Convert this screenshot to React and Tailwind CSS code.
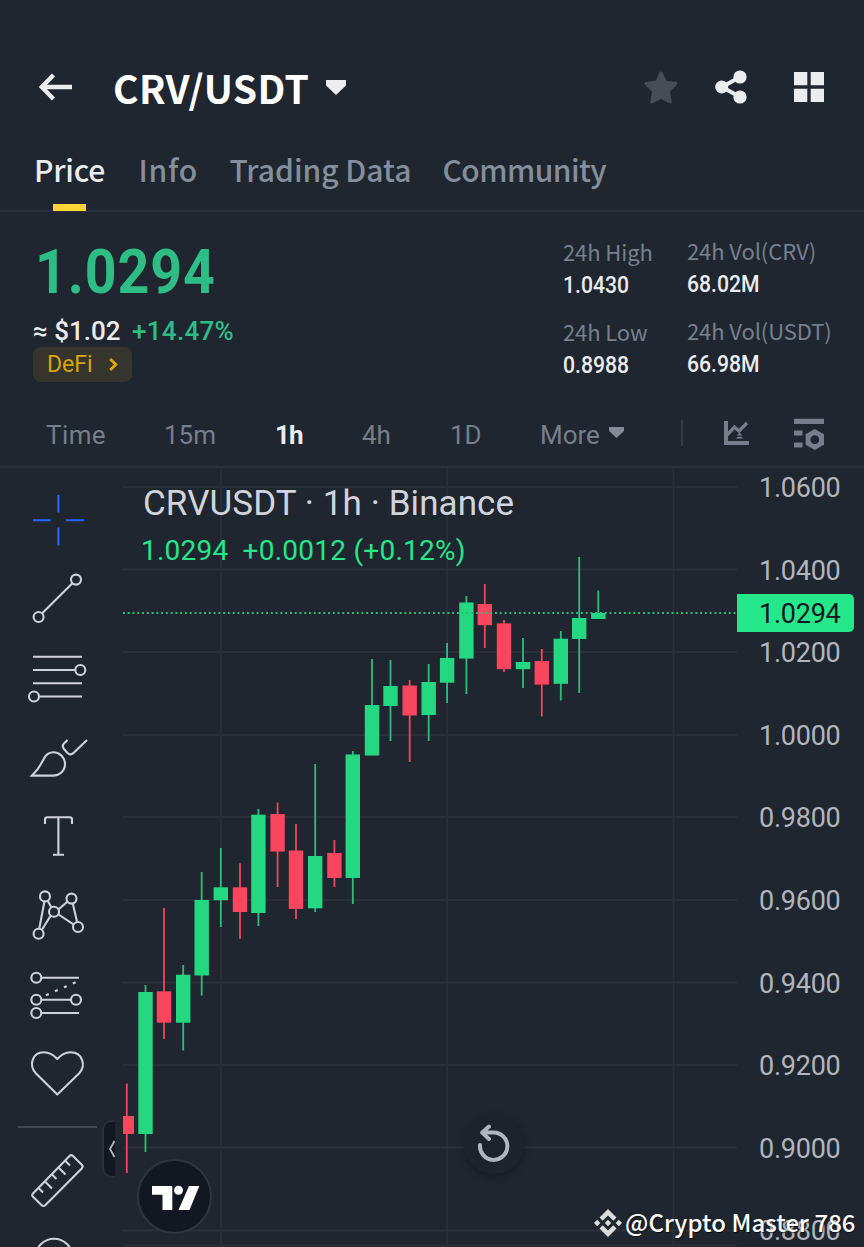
const PLEX = "font-['Noto_Sans_CJK_SC','Noto_Sans',sans-serif]";
const DIN = "font-[Roboto,sans-serif]";

// center x, body top, body bottom, wick top, wick bottom, rising
const CANDLES = [
  [126.8, 1116, 1134, 1083.5, 1173, 0],
  [145.5, 992, 1134, 985, 1152, 1],
  [164, 991.3, 1022.7, 908, 1039, 0],
  [183.2, 974.7, 1022.7, 965, 1050.5, 1],
  [201.7, 900, 975.5, 872, 995.5, 1],
  [220.8, 887.3, 900.2, 848, 927, 1],
  [240, 887.3, 912, 863.3, 938.8, 0],
  [258.4, 814.7, 913, 809, 926, 1],
  [277.6, 814, 851.6, 802.5, 887, 0],
  [296, 850.5, 909, 824, 919, 0],
  [315.2, 856, 908.3, 764, 912, 1],
  [334.4, 853, 878, 840, 887, 0],
  [352.8, 754.5, 878, 751, 904, 1],
  [372, 705, 755.5, 659, 755, 1],
  [390.5, 686, 706, 660, 741, 1],
  [409.7, 685.5, 715.5, 680, 762, 0],
  [428.7, 682, 715, 664, 741, 1],
  [447.1, 658, 682.7, 643, 703, 1],
  [466.4, 602.5, 658.6, 596, 694, 1],
  [484.8, 604, 625.2, 584, 648, 0],
  [504, 623.4, 669.2, 620, 672, 0],
  [523, 662, 669.2, 638, 688, 1],
  [541.8, 661, 684.6, 649, 716.5, 0],
  [560.8, 638.7, 683.8, 631, 700.5, 1],
  [579.2, 618, 639, 557, 693, 1],
  [598.3, 613, 619, 590.5, 614, 1],
];
const GRID_Y = [487, 569.5, 652, 735, 817, 900, 982.5, 1065, 1147.5, 1230.5, 1245.5];
const GRID_X = [221, 447, 673.5];
const LABELS = ["1.0600", "1.0400", "1.0200", "1.0000", "0.9800", "0.9600", "0.9400", "0.9200", "0.9000", "0.8800"];

function Header() {
  return (
    <header className="flex h-[130px] items-start pt-[62px] pr-[40px] pl-[39px]">
      <svg className="mt-[11px] h-[28px] w-[33px] shrink-0" viewBox="0 0 33 28" fill="none" stroke="#eaecef" strokeWidth="4.4">
        <path d="M2.5 14H33M14.5 2L2.8 14L14.5 26" />
      </svg>
      <h1 className={`${PLEX} ml-[41px] h-[48px] w-[213px] text-[39px] leading-[50px] font-bold tracking-[0.3px] whitespace-nowrap text-white`}>CRV/USDT</h1>
      <svg className="mt-[18px] h-[15px] w-[20px] shrink-0" viewBox="0 0 20 15" fill="#eaecef">
        <path d="M0 0H20V5.5L10 15L0 5.5Z" />
      </svg>
      <div className="mt-[1px] ml-auto flex items-center">
        <svg className="mt-[7px] h-[33px] w-[34px]" viewBox="0 0 34 33" fill="#474d57" stroke="#474d57" strokeWidth="3" strokeLinejoin="round">
          <path d="M17 2L21.3 11L32 12.6L24.4 20L26.2 31L17 26.2L7.8 31L9.6 20L2 12.6L12.7 11Z" />
        </svg>
        <svg className="mt-[7px] ml-[37px] h-[34px] w-[33px]" viewBox="0 0 33 34" fill="#eaecef">
          <path d="M7 17L25 7M7 17L25 27" stroke="#eaecef" strokeWidth="4" />
          <circle cx="6.7" cy="17" r="6.5" />
          <circle cx="25" cy="7" r="6.6" />
          <circle cx="25" cy="27" r="6.6" />
        </svg>
        <svg className="mt-[7px] ml-[46px] h-[30px] w-[30px]" viewBox="0 0 30 30" fill="#eaecef">
          <path d="M0 0H13.3V13.3H0ZM16.7 0H30V13.3H16.7ZM0 16.7H13.3V30H0ZM16.7 16.7H30V30H16.7Z" />
        </svg>
      </div>
    </header>
  );
}

function Tabs() {
  return (
    <nav className={`${PLEX} flex h-[82px] border-b-2 border-[#2a2e39] pl-[34px] text-[30px] leading-[79px] font-medium whitespace-nowrap text-[#848e9c]`}>
      <div className="flex w-[104.5px] flex-col">
        <span className="h-[74px] tracking-[-0.2px] text-[#eaecef]">Price</span>
        <span className="ml-[19px] h-[7px] w-[33px] shrink-0 bg-[#fcd535]" />
      </div>
      <span className="w-[91px] tracking-[0.7px]">Info</span>
      <span className="w-[213px]">Trading Data</span>
      <span className="tracking-[-0.55px]">Community</span>
    </nav>
  );
}

function Stat({ label, value, className }) {
  return (
    <div className={className}>
      <div className={`${PLEX} h-[32px] text-[22px] leading-[28px] tracking-[-0.1px] whitespace-nowrap text-[#76808f]`}>{label}</div>
      <div className={`${DIN} h-[32px] origin-left scale-x-[0.92] text-[23px] leading-[33px] font-medium whitespace-nowrap text-[#eaecef]`}>{value}</div>
    </div>
  );
}

function Summary() {
  return (
    <section className="flex h-[190px]">
      <div className="w-[563px] pl-[33px]">
        <div className={`${DIN} mt-[28px] ml-[2px] h-[64px] w-[200px] origin-left scale-x-[0.91] text-[61px] leading-[64px] font-bold tracking-[1px] text-[#2ebd85]`}>1.0294</div>
        <div className={`${DIN} mt-[12px] flex h-[30px] text-[26px] leading-[30px] font-medium whitespace-nowrap`}>
          <span className="w-[99px] text-[#eaecef]">≈ $1.02</span>
          <span className="tracking-[0.3px] text-[#2ebd85]">+14.47%</span>
        </div>
        <div className="mt-[1px] flex h-[35px] w-[99px] items-center rounded-[8px] bg-[#35342d] pl-[14px]">
          <span className={`${DIN} w-[62px] text-[23px] leading-[36px] text-[#d9a50b]`}>DeFi</span>
          <svg className="h-[13px] w-[9px]" viewBox="0 0 9 13" fill="none" stroke="#e0a90a" strokeWidth="2.8">
            <path d="M1.2 1L6.8 6.5L1.2 12" />
          </svg>
        </div>
      </div>
      <div className="flex w-[124px] flex-col pt-[25px]">
        <Stat label="24h High" value="1.0430" />
        <Stat className="mt-[16px]" label="24h Low" value="0.8988" />
      </div>
      <div className="flex flex-col pt-[24px]">
        <Stat label="24h Vol(CRV)" value="68.02M" />
        <Stat className="mt-[16px]" label="24h Vol(USDT)" value="66.98M" />
      </div>
    </section>
  );
}

function Intervals() {
  return (
    <div className={`${DIN} flex h-[66px] border-b-2 border-[#29303a] pl-[46px] text-[26px] leading-[67px] whitespace-nowrap text-[#767e8c]`}>
      <span className="w-[118px] tracking-[0.4px]">Time</span>
      <span className="w-[111px]">15m</span>
      <span className="w-[87px] font-bold tracking-[-0.8px] text-[#eaecef]">1h</span>
      <span className="w-[88px]">4h</span>
      <span className="w-[90px]">1D</span>
      <span className="w-[69px]">More</span>
      <svg className="mt-[25px] h-[11px] w-[15px]" viewBox="0 0 15 11" fill="#848b97">
        <path d="M0 0H15V4L7.5 11L0 4Z" />
      </svg>
      <span className="mt-[18px] ml-[57px] h-[26px] w-[2px] bg-[#333b47]" />
      <svg className="mt-[18px] ml-[41px] h-[26px] w-[26px]" viewBox="0 0 26 26" fill="none" stroke="#767e8c" strokeWidth="4">
        <path d="M2 1V23H25" />
        <path d="M3 15L10.5 7L15 11L23 3" strokeWidth="3.3" />
        <path d="M15.5 12.5L18.4 15.5H12.6ZM11.5 18.6Q15.5 14.6 19.5 18.6Z" fill="#767e8c" stroke="none" />
      </svg>
      <svg className="mt-[16px] ml-[43px] h-[33px] w-[32px]" viewBox="0 0 32 33" fill="#767e8c">
        <path d="M1 0.7H31V6H1ZM1 12.5H9.5V17.5H1ZM1 24.5H9.5V29.5H1Z" />
        <path fillRule="evenodd" d="M21.8 11L31 16.3V26.8L21.8 32L12.6 26.8V16.3ZM21.8 17.2A4.4 4.4 0 1 0 21.8 26A4.4 4.4 0 1 0 21.8 17.2Z" />
      </svg>
    </div>
  );
}

function Toolbar() {
  return (
    <aside className="flex w-[123px] shrink-0">
      <svg className="h-[779px] w-[103px] shrink-0" viewBox="0 468 103 779" fill="none" stroke="#cfd2db" strokeWidth="2.1">
        <path d="M58.4 495V512.5M58.4 527.5V545.5M33 520.3H50.5M66 520.3H84" stroke="#2962ff" />
        <path d="M42.2 613.3L72.4 583.3" />
        <circle cx="38.6" cy="617" r="5" />
        <circle cx="76" cy="579.6" r="5" />
        <path d="M33 656.7H82M33 670H75M33 683.3H82M39 696.5H82" />
        <circle cx="80.3" cy="670" r="5" />
        <circle cx="34" cy="696.5" r="5" />
        <path d="M32 775.6C40 768 42 762 44 758.5C46 754.5 49.5 752.3 53.5 752.3C59.5 752.3 65 757.5 65 764C65 770.5 60 775.6 53 775.6Z" />
        <path d="M67.5 740L64 743.5Q61.5 746 64 749L67.5 753Q70.7 756 74 752.5L87 740" />
        <path d="M45 824V819.5Q45 817.3 47.5 817.3H69.5Q72 817.3 72 819.5V824M58.4 817.3V854.8M53 854.8H64" />
        <path d="M44.4 901.5L39.3 928.5M47.8 900.9L51.5 907.5M50.6 915.9L41.9 929.8M58.4 909.5L67.3 901.8M58.6 914.5L73.8 924.6M72.8 903.6L77.1 922" />
        <circle cx="45" cy="896.4" r="5" />
        <circle cx="71.5" cy="898.6" r="5" />
        <circle cx="54" cy="911.8" r="5" />
        <circle cx="78" cy="927" r="5" />
        <circle cx="38.6" cy="933.8" r="5" />
        <path d="M41.5 977.7H79M41.5 999.8H71M41.5 1013H79" />
        <path d="M46 995.3L76 982" strokeWidth="2.2" strokeDasharray="3 6.8" />
        <circle cx="36.3" cy="977.7" r="5" />
        <circle cx="36.3" cy="999.8" r="5" />
        <circle cx="76" cy="999.8" r="5" />
        <circle cx="36.3" cy="1013" r="5" />
        <path d="M57.3 1094.5L36 1073.5C28.5 1065.5 32 1052.3 44 1052.3C49.5 1052.3 53 1054.5 57.3 1059C61.5 1054.5 65 1052.3 70.5 1052.3C82.5 1052.3 86.5 1065.5 79 1073.5Z" strokeLinejoin="round" />
        <path d="M18 1127H97" stroke="#41464f" strokeWidth="2" />
        <path d="M33 1193.5L69.5 1156Q71.3 1154.3 73 1156L82 1165Q83.3 1166.5 82 1168.2L45.5 1205Q43.3 1207 41.5 1205L33 1196.8Q31.3 1195.2 33 1193.5Z" />
        <path d="M38.5 1188L43 1192.5M45 1181.5L52 1188.5M52 1174.5L56.5 1179M58.5 1167.5L65.5 1174.5M65.5 1161L70 1165.5" />
        <circle cx="54" cy="1257" r="18.3" />
      </svg>
      <div className="mt-[652px] -ml-px flex h-[58px] w-[13px] items-center justify-end rounded-l-[10px] border-2 border-r-0 border-[#2a2f39] bg-[#131722]">
        <svg className="h-[18px] w-[7px]" viewBox="0 0 7 18" fill="none" stroke="#b5b8c1" strokeWidth="1.8">
          <path d="M6.5 1L2 9L6.5 17" />
        </svg>
      </div>
    </aside>
  );
}

function Chart() {
  return (
    <div className="relative w-[614px] shrink-0">
      <svg className="block h-[779px] w-[614px]" viewBox="123 468 614 779">
        <g stroke="#2a2f39" strokeWidth="1.8">
          {GRID_Y.map((y) => <line key={y} x1="123" x2="737" y1={y} y2={y} />)}
          {GRID_X.map((x) => <line key={x} y1="468" y2="1245" x1={x} x2={x} />)}
        </g>
        {CANDLES.map(([x, t, b, wt, wb, up]) => (
          <g key={x} fill={up ? "#24d882" : "#f7465d"}>
            <rect x={x - 0.9} y={wt} width="1.8" height={wb - wt} fill={up ? "#2ebd7d" : "#f2455b"} />
            <rect x={x - 7.2} y={t} width="14.4" height={b - t} />
          </g>
        ))}
        <line x1="123" x2="737" y1="613" y2="613" stroke="#2cc183" strokeWidth="1.8" strokeDasharray="1.9 2.87" />
      </svg>
      <div className="absolute top-[13.5px] left-[20px] h-[44px] font-[Roboto,sans-serif] text-[35px] leading-[44px] tracking-[0.08px] whitespace-nowrap text-[#d1d4dc]">CRVUSDT · 1h · Binance</div>
      <div className="absolute top-[66px] left-[18px] flex h-[34px] gap-[14px] font-[Roboto,sans-serif] text-[28px] leading-[34px] tracking-[0.25px] whitespace-nowrap text-[#26e58b]">
        <span>1.0294</span>
        <span>+0.0012 (+0.12%)</span>
      </div>
      <div className="absolute top-[646px] left-[341px] flex h-[60px] w-[60px] items-center justify-center rounded-full bg-[#1e222d] shadow-[0_3px_6px_rgba(15,18,26,0.55)]">
        <svg className="h-[40px] w-[34px]" viewBox="0 0 34 40" fill="none" stroke="#b2b5be" strokeWidth="4" strokeLinecap="round" strokeLinejoin="round">
          <path d="M3 21A13.7 13.7 0 1 0 16.7 8.5H6M12 2.5L5.2 8.6L12 15" />
        </svg>
      </div>
      <div className="absolute top-[691px] left-[14px] h-[75px] w-[75px] rounded-full border-2 border-[#2f343f] bg-[#131722]">
        <svg className="mt-[24px] ml-[12px] h-[26px] w-[49px]" viewBox="0 0 49 26" fill="#fff">
          <path d="M1 1H21.3V25H11.5V9.7H1ZM38 1H48.3L38.5 25H27.5Z" />
          <circle cx="27.5" cy="5.3" r="4.5" />
        </svg>
      </div>
    </div>
  );
}

function Axis() {
  return (
    <div className="relative w-[127px] font-[Roboto,sans-serif] text-[27px] tracking-[-0.25px] text-[#b2b5be]">
      <div className="-mt-[22px] flex flex-col pl-[22px]">
        {LABELS.map((l) => <span key={l} className="h-[82.6px] shrink-0 leading-[84px]">{l}</span>)}
      </div>
      <div className="absolute top-[126px] left-0 h-[38px] w-[117px] rounded-r-[5px] bg-[#25e88b] pl-[22px] leading-[40px] text-[#131722]">1.0294</div>
    </div>
  );
}

export default function App() {
  return (
    <main className="relative h-[1247px] w-[864px] overflow-hidden bg-[#202630]">
      <Header />
      <Tabs />
      <Summary />
      <Intervals />
      <div className="flex h-[779px] overflow-hidden">
        <Toolbar />
        <Chart />
        <Axis />
      </div>
      <div className="absolute top-[1203px] left-[594px] flex h-[40px] items-center">
        <svg className="h-[28px] w-[28px]" viewBox="0 0 28 28" fill="#dcdcdc">
          <path d="M14 0L22.5 8.5L19.3 11.7L14 6.4L8.7 11.7L5.5 8.5ZM14 28L22.5 19.5L19.3 16.3L14 21.6L8.7 16.3L5.5 19.5ZM14 10.8L17.2 14L14 17.2L10.8 14ZM3.2 10.8L6.4 14L3.2 17.2L0 14ZM24.8 10.8L28 14L24.8 17.2L21.6 14Z" />
        </svg>
        <span className="ml-[3px] h-[40px] font-['Noto_Sans_CJK_SC',sans-serif] text-[24px] leading-[38px] font-medium tracking-[0.05px] whitespace-nowrap text-white [text-shadow:1px_1px_1px_rgba(0,0,0,0.6)]">@Crypto Master 786</span>
      </div>
    </main>
  );
}
